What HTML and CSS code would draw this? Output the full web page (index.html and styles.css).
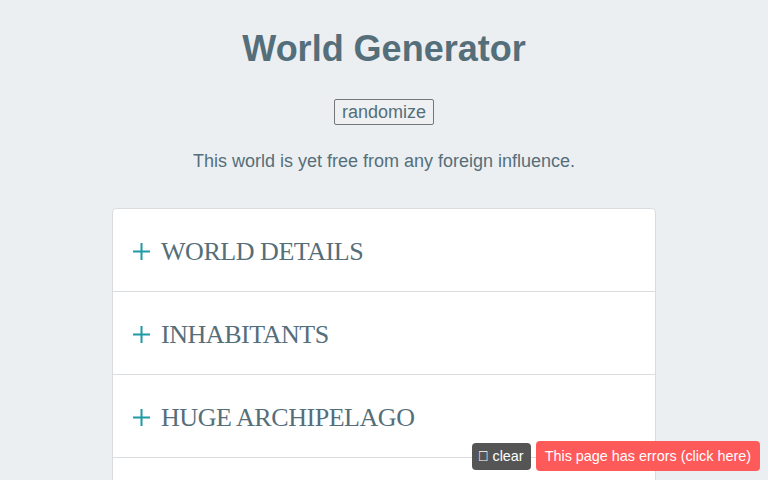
FILE: index.html
```html
<!DOCTYPE html>
<html lang="en">
<head>
    <meta charset="UTF-8">
    <meta name="viewport" content="width=device-width, initial-scale=1.0">
    <title>World Generator</title>
    <link rel="stylesheet" href="styles.css">
</head>
<body>

    <div class="page">
        <h1 class="title">World Generator</h1>

        <button class="randomBtn">randomize</button>

        <p class="influence">This world is yet free from any foreign influence.</p>

        <div class="accordion">
            <div class="section">
                <svg class="plus" viewBox="0 0 17 17"><path d="M8.5 0v17M0 8.5h17"/></svg>
                <h2>WORLD DETAILS</h2>
            </div>
            <div class="section">
                <svg class="plus" viewBox="0 0 17 17"><path d="M8.5 0v17M0 8.5h17"/></svg>
                <h2>INHABITANTS</h2>
            </div>
            <div class="section">
                <svg class="plus" viewBox="0 0 17 17"><path d="M8.5 0v17M0 8.5h17"/></svg>
                <h2>HUGE ARCHIPELAGO</h2>
            </div>
            <div class="section"></div>
        </div>
    </div>

    <div class="errorBar">
        <span class="clearBtn">&#xf00d; clear</span>
        <span class="errorBtn">This page has errors (click here)</span>
    </div>

</body>
</html>
```

FILE: styles.css
```css
body{
    margin: 0;
    background-color: #eceff1;
    font-family: "Liberation Sans", Arial, sans-serif;
    color: #546e7a;
}

.page{
    display: flex;
    flex-direction: column;
    align-items: center;
    padding-top: 28px;
}

.title{
    font-size: 36px;
    font-weight: bold;
    margin: 0;
    line-height: 42px;
}

.randomBtn{
    margin-top: 29px;
    font-family: "Liberation Sans", Arial, sans-serif;
    font-size: 18px;
    color: #546e7a;
    background-color: #eef0f2;
    border: 1px solid #767676;
    border-radius: 2px;
    padding: 1px 7px;
    line-height: 22px;
}

.influence{
    font-size: 18px;
    margin: 24px 0 0 0;
    line-height: 24px;
}

.accordion{
    width: 542px;
    margin-top: 35px;
    background-color: #fff;
    border: 1px solid #d8dcde;
    border-radius: 4px;
}

.section{
    display: flex;
    align-items: center;
    height: 82px;
    padding-left: 20px;
    border-bottom: 1px solid #d8dcde;
}

.plus{
    width: 17px;
    height: 17px;
    margin-top: 2px;
    margin-right: 11px;
    stroke: #1e9aa5;
    stroke-width: 2;
    fill: none;
}

.section h2{
    margin: 3px 0 0 0;
    font-family: "Liberation Serif", "Times New Roman", serif;
    font-weight: normal;
    font-size: 26px;
    letter-spacing: -0.45px;
    color: #546e7a;
}

.errorBar{
    position: fixed;
    right: 8px;
    bottom: 9px;
    display: flex;
    align-items: center;
    gap: 5px;
    font-size: 14.4px;
}

.clearBtn{
    background-color: #555;
    color: #fff;
    padding: 5px 7px 5px 6px;
    border-radius: 4px;
    line-height: 17px;
}

.errorBtn{
    background-color: #ff5a5a;
    color: #fff;
    padding: 6px 9px;
    border-radius: 4px;
    line-height: 18px;
}
```
